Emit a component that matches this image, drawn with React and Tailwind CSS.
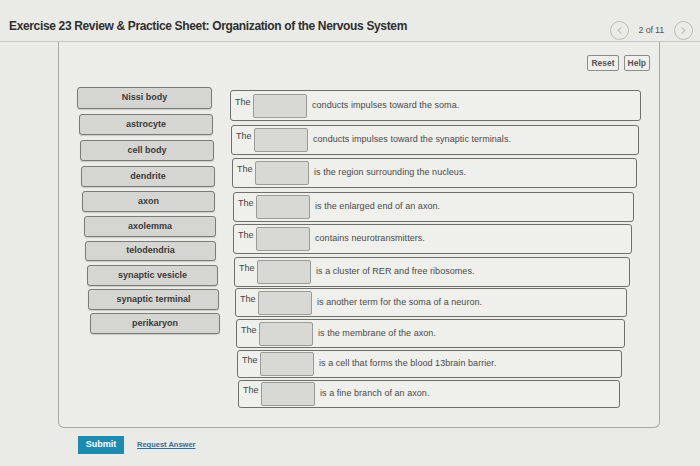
import { ChevronLeft, ChevronRight } from "lucide-react";

const terms = [
  { label: "Nissi body", cls: "mt-0 ml-0 w-[135px] h-[22px]" },
  { label: "astrocyte", cls: "mt-[5px] ml-[2px] w-[134px] h-[21px]" },
  { label: "cell body", cls: "mt-[5px] ml-[3px] w-[134px] h-[21px]" },
  { label: "dendrite", cls: "mt-[5px] ml-[4px] w-[134px] h-[21px]" },
  { label: "axon", cls: "mt-[4px] ml-[5px] w-[133px] h-[21px]" },
  { label: "axolemma", cls: "mt-[4px] ml-[7px] w-[132px] h-[21px]" },
  { label: "telodendria", cls: "mt-[4px] ml-[8px] w-[131px] h-[20px]" },
  { label: "synaptic vesicle", cls: "mt-[4px] ml-[10px] w-[131px] h-[21px]" },
  { label: "synaptic terminal", cls: "mt-[3px] ml-[11px] w-[131px] h-[21px]" },
  { label: "perikaryon", cls: "mt-[3px] ml-[13px] w-[130px] h-[21px]" },
];

const sentences = [
  { text: "conducts impulses toward the soma.", cls: "mt-0 ml-0 w-[411px] h-[31px]" },
  { text: "conducts impulses toward the synaptic terminals.", cls: "mt-[4px] ml-[1px] w-[408px] h-[30px]" },
  { text: "is the region surrounding the nucleus.", cls: "mt-[3px] ml-[2px] w-[405px] h-[30px]" },
  { text: "is the enlarged end of an axon.", cls: "mt-[4px] ml-[3px] w-[401px] h-[30px]" },
  { text: "contains neurotransmitters.", cls: "mt-[2px] ml-[3px] w-[399px] h-[30px]" },
  { text: "is a cluster of RER and free ribosomes.", cls: "mt-[3px] ml-[4px] w-[396px] h-[30px]" },
  { text: "is another term for the soma of a neuron.", cls: "mt-[1px] ml-[5px] w-[392px] h-[29px]" },
  { text: "is the membrane of the axon.", cls: "mt-[2px] ml-[6px] w-[389px] h-[29px]" },
  { text: "is a cell that forms the blood 13brain barrier.", cls: "mt-[2px] ml-[7px] w-[385px] h-[28px]" },
  { text: "is a fine branch of an axon.", cls: "mt-[2px] ml-[8px] w-[382px] h-[28px]" },
];

export default function App() {
  return (
    <div
      className="w-[700px] h-[466px] overflow-hidden bg-[#eaeae6] text-[#333]"
      style={{ fontFamily: '"Liberation Sans", Arial, sans-serif' }}
    >
      {/* HEADER */}
      <div className="h-[42px] flex items-start justify-between border-b border-[#c8c8c3] pl-[9px] pr-[7px]">
        <h1 className="pt-[19px] text-[12px] leading-[14px] font-bold tracking-[-0.35px] text-[#2f2f2f]">
          Exercise 23 Review &amp; Practice Sheet: Organization of the Nervous System
        </h1>
        <div className="flex items-center gap-[10px] pt-[21px]">
          <div className="w-[19px] h-[19px] rounded-full border border-[#bdbdb8] flex items-center justify-center text-[#888]">
            <ChevronLeft size={11} strokeWidth={1.6} />
          </div>
          <span className="text-[9px] text-[#555] tracking-[-0.2px]">2 of 11</span>
          <div className="w-[19px] h-[19px] rounded-full border border-[#bdbdb8] flex items-center justify-center text-[#888]">
            <ChevronRight size={11} strokeWidth={1.6} />
          </div>
        </div>
      </div>

      {/* PANEL */}
      <div className="ml-[58px] w-[602px] h-[386px] border-l border-r border-b border-[#a9a9a4] rounded-b-[6px] bg-[#ecece8]">
        <div className="flex justify-end gap-[5px] pt-[13px] pr-[9px]">
          <button className="h-[16px] px-[3px] rounded-[2px] border border-[#8d8d88] bg-[#efefec] text-[8.5px] font-bold text-[#555]">
            Reset
          </button>
          <button className="h-[16px] px-[3px] rounded-[2px] border border-[#8d8d88] bg-[#efefec] text-[8.5px] font-bold text-[#555]">
            Help
          </button>
        </div>

        <div className="flex items-start pl-[18px] mt-[16px]">
          {/* TERMS */}
          <div className="w-[153px] shrink-0 flex flex-col">
            {terms.map((t) => (
              <div
                key={t.label}
                className={`${t.cls} flex items-center justify-center rounded-[3px] border-[1.5px] border-[#7a7a76] bg-[#d5d5d1] shadow-[0_1px_1px_rgba(0,0,0,0.15)] text-[9px] font-bold text-[#3a3a3a]`}
              >
                {t.label}
              </div>
            ))}
          </div>

          {/* SENTENCES */}
          <div className="flex flex-col mt-[3px]">
            {sentences.map((s) => (
              <div
                key={s.text}
                className={`${s.cls} flex items-center rounded-[3px] border-[1.5px] border-[#6f6f6b] bg-[#efefeb] pl-[4px]`}
              >
                <span className="w-[18px] text-[9px] text-[#444] -mt-[6px]">The</span>
                <div className="w-[54px] h-[24px] rounded-[2px] border border-[#9a9a96] bg-[#d8d8d4]" />
                <span className="ml-[5px] text-[9px] text-[#4a4a4a] tracking-[0.05px]">
                  {s.text}
                </span>
              </div>
            ))}
          </div>
        </div>
      </div>

      {/* FOOTER */}
      <div className="flex items-center ml-[78px] mt-[8px] gap-[13px]">
        <button className="w-[46px] h-[18px] bg-[#1c8bb2] text-white text-[9px] font-bold">
          Submit
        </button>
        <span className="text-[7.5px] font-bold text-[#2f6f9e] underline">
          Request Answer
        </span>
      </div>
    </div>
  );
}
